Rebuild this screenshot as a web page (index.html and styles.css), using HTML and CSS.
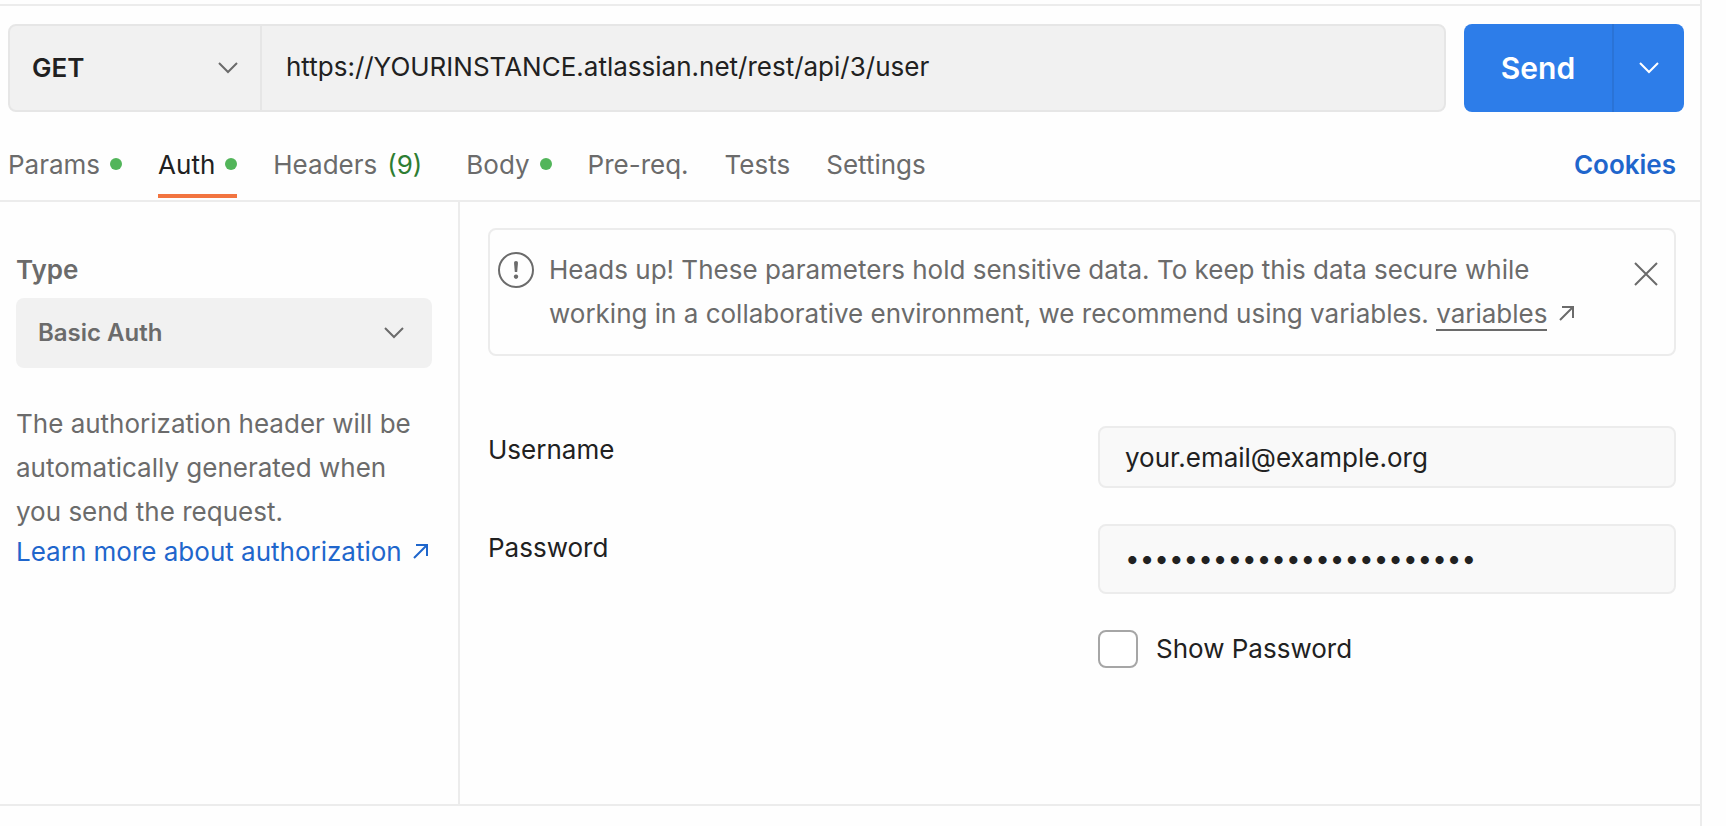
FILE: index.html
```html
<!DOCTYPE html>
<html lang="en">
<head>
  <meta charset="UTF-8">
  <title>API request</title>
  <link rel="stylesheet" href="styles.css">
</head>
<body>
  <main class="panel">
    <form class="request-bar">
      <div class="url-group">
        <div class="select-wrap method">
          <select aria-label="Method">
            <option>GET</option>
            <option>POST</option>
          </select>
          <svg class="chevron" viewBox="0 0 20 12" width="20" height="12"><path d="M1 1l9 9 9-9"/></svg>
        </div>
        <input class="url" type="text" aria-label="Request URL" value="https://YOURINSTANCE.atlassian.net/rest/api/3/user">
      </div>
      <div class="send-group">
        <button class="send" type="button">Send</button>
        <button class="send-more" type="button" aria-label="Send options">
          <svg class="chevron" viewBox="0 0 20 12" width="20" height="12"><path d="M1 1l9 9 9-9"/></svg>
        </button>
      </div>
    </form>

    <nav class="tabs">
      <a class="tab" href="#params">Params <span class="dot"></span></a>
      <a class="tab active" href="#auth">Auth <span class="dot"></span></a>
      <a class="tab headers" href="#headers">Headers <span class="count">(9)</span></a>
      <a class="tab" href="#body">Body <span class="dot"></span></a>
      <a class="tab" href="#prereq">Pre-req.</a>
      <a class="tab" href="#tests">Tests</a>
      <a class="tab" href="#settings">Settings</a>
      <a class="cookies" href="#cookies">Cookies</a>
    </nav>

    <div class="content">
      <aside class="sidebar">
        <label class="type-label" for="authType">Type</label>
        <div class="select-wrap auth-type">
          <select id="authType">
            <option>Basic Auth</option>
            <option>Bearer Token</option>
          </select>
          <svg class="chevron" viewBox="0 0 20 12" width="20" height="12"><path d="M1 1l9 9 9-9"/></svg>
        </div>
        <p class="help">The authorization header will be automatically generated when you send the request.</p>
        <a class="learn-more" href="#learn">Learn more about authorization
          <svg class="arrow" viewBox="0 0 16 18" width="16" height="18"><path d="M1 15L14 2M3 2h11v11"/></svg></a>
      </aside>

      <section class="auth">
        <div class="alert">
          <svg class="alert-icon" viewBox="0 0 36 36" width="36" height="36">
            <circle cx="18" cy="18" r="17"/>
            <path d="M16 10.500q0-1.500 2-1.500t2 1.500L19.200 20h-2.400z"/>
            <path d="M18 22.500a2.200 2.200 0 1 0 .01 0z"/>
          </svg>
          <p class="alert-text">Heads up! These parameters hold sensitive data. To keep this data secure while working in a collaborative environment, we recommend using variables. <a href="#variables">variables</a>
            <svg class="arrow" viewBox="0 0 16 18" width="16" height="18"><path d="M1 15L14 2M3 2h11v11"/></svg></p>
          <button class="close" type="button" aria-label="Close">
            <svg viewBox="0 0 24 24" width="24" height="24"><path d="M1 1l22 22M23 1L1 23"/></svg>
          </button>
        </div>

        <form class="fields">
          <label for="username">Username</label>
          <input id="username" class="field" type="text" value="your.email@example.org">
          <label for="password">Password</label>
          <input id="password" class="field password" type="password" value="abcdefghijklmnopqrstuvwx">
          <label class="show-password"><input type="checkbox"> Show Password</label>
        </form>
      </section>
    </div>
  </main>
</body>
</html>
```
FILE: styles.css
```css
* {
  box-sizing: border-box;
}
body {
  margin: 0;
  font-family: Inter, "Liberation Sans", sans-serif;
  font-size: 26px;
  line-height: 32px;
  color: #212121;
  background: #fefefe;
}
input, select, button {
  font: inherit;
  color: inherit;
  margin: 0;
  border: 0;
  border-radius: 0;
  background: none;
}
a {
  color: inherit;
  text-decoration: none;
}
p {
  margin: 0;
}
svg {
  fill: none;
  stroke: currentColor;
  stroke-width: 2;
}
.panel {
  display: flex;
  flex-direction: column;
  min-height: 100vh;
  margin-right: 24px;
  padding-top: 4px;
  padding-bottom: 20px;
  border-right: 2px solid #ececec;
}

/* request bar */
.request-bar {
  display: flex;
  gap: 18px;
  padding: 18px 16px 0 8px;
  border-top: 2px solid #ececec;
}
.url-group {
  flex: 1;
  display: flex;
  height: 88px;
  background: #f1f1f1;
  border: 2px solid #e6e6e6;
  border-radius: 8px;
}
.select-wrap {
  display: grid;
  align-items: center;
}
.select-wrap select {
  grid-area: 1 / 1;
  width: 100%;
  height: 100%;
  appearance: none;
  font-weight: 600;
}
.select-wrap .chevron {
  grid-area: 1 / 1;
  justify-self: end;
  pointer-events: none;
  color: #6b6b6b;
}
.method {
  width: 252px;
  border-right: 2px solid #e6e6e6;
}
.method select {
  padding: 0 22px;
}
.method .chevron {
  margin-right: 22px;
}
.url {
  flex: 1;
  min-width: 0;
  padding: 0 24px 2px;
}
.send-group {
  display: flex;
  width: 220px;
  color: #fff;
  background: #2d7de9;
  border-radius: 8px;
}
.send {
  flex: 1;
  padding-bottom: 2px;
  font-size: 30px;
  font-weight: 600;
}
.send-more {
  display: flex;
  align-items: center;
  justify-content: center;
  width: 72px;
  border-left: 2px solid #2a73d6;
}

/* tabs */
.tabs {
  display: flex;
  gap: 36px;
  padding: 32px 24px 0 8px;
  border-bottom: 2px solid #ececec;
  color: #6b6b6b;
}
.tab {
  display: flex;
  align-items: center;
  gap: 10px;
  height: 54px;
  margin-bottom: 2px;
  padding-bottom: 8px;
  border-bottom: 4px solid transparent;
}
.active {
  color: #212121;
  border-color: #f27440;
}
.dot {
  width: 12px;
  height: 12px;
  margin-bottom: 2px;
  border-radius: 50%;
  background: #52b55a;
}
.headers {
  margin-right: 8px;
}
.count {
  color: #2e7d32;
}
.cookies {
  margin-left: auto;
  padding-top: 5px;
  font-weight: 600;
  color: #1f66cc;
}

/* content */
.content {
  flex: 1;
  display: flex;
  border-bottom: 2px solid #ececec;
}
.sidebar {
  width: 460px;
  padding: 52px 16px 0;
  border-right: 2px solid #ececec;
  color: #6b6b6b;
}
.type-label {
  display: block;
  margin-bottom: 12px;
  font-weight: 600;
}
.auth-type {
  height: 70px;
  margin-right: 10px;
  background: #f1f1f1;
  border-radius: 8px;
}
.auth-type select {
  padding: 0 22px;
  font-size: 24px;
}
.auth-type .chevron {
  margin-right: 28px;
}
.help {
  margin-top: 34px;
  padding-right: 16px;
  line-height: 44px;
}
.learn-more {
  line-height: 36px;
  white-space: nowrap;
  color: #1f66cc;
}
.arrow {
  margin-left: 4px;
}
.auth {
  flex: 1;
  padding: 26px 24px 0 28px;
}
.alert {
  display: flex;
  align-items: flex-start;
  gap: 15px;
  min-height: 128px;
  padding: 18px 16px 18px 8px;
  border: 2px solid #ececec;
  border-radius: 8px;
  color: #6b6b6b;
}
.alert-icon {
  flex: none;
  margin-top: 4px;
}
.alert-icon path {
  fill: currentColor;
  stroke: none;
}
.alert-text {
  flex: 1;
  line-height: 44px;
}
.alert-text a {
  border-bottom: 2px solid;
}
.close {
  display: flex;
  padding: 14px 0;
}
.fields {
  display: grid;
  grid-template-columns: 610px 1fr;
  align-items: start;
  row-gap: 36px;
  padding-top: 70px;
}
.fields > label {
  padding-top: 8px;
}
.field {
  height: 62px;
  padding: 0 25px;
  background: #f9f9f9;
  border: 2px solid #ececec;
  border-radius: 8px;
}
.password {
  height: 70px;
  padding-bottom: 2px;
}
.fields .show-password {
  grid-column: 2;
  display: flex;
  align-items: center;
  gap: 18px;
  padding: 0;
}
.show-password input {
  appearance: none;
  width: 40px;
  height: 38px;
  border: 2px solid #a6a6a6;
  border-radius: 8px;
  background: #fff;
}
```
